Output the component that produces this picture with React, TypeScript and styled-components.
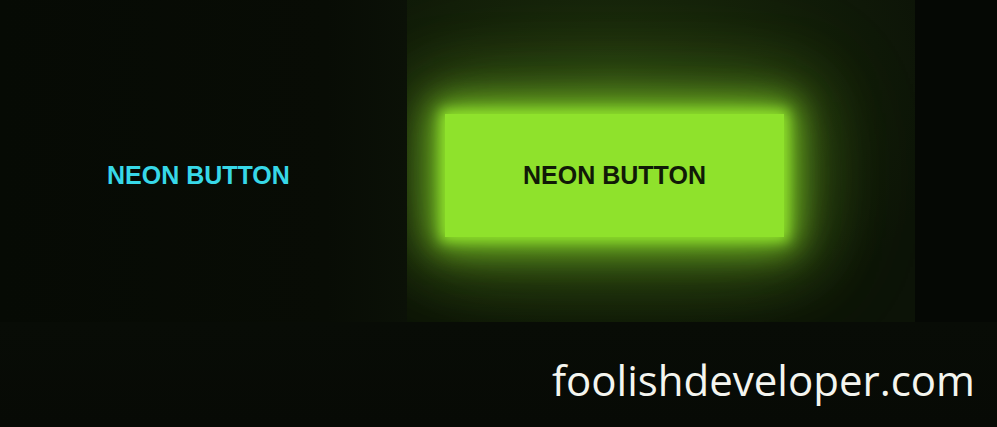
import styled, { createGlobalStyle } from "styled-components";

const GlobalStyle = createGlobalStyle`
  html, body {
    margin: 0;
    padding: 0;
    background: #060904;
  }
`;

const NEON = "#8fe22c";

const App = () => {
  return (
    <>
      <GlobalStyle />
      <Page>
        <TopRow>
          <LeftPane>
            <GhostButton>NEON BUTTON</GhostButton>
          </LeftPane>
          <Stage>
            <NeonButton>NEON BUTTON</NeonButton>
          </Stage>
          <Gutter />
        </TopRow>
        <Footer>
          <Watermark>foolishdeveloper.com</Watermark>
        </Footer>
      </Page>
    </>
  );
};

const Page = styled.main`
  width: 997px;
  height: 427px;
  display: grid;
  grid-template-rows: 322px 1fr;
  background: #070a05;
  overflow: hidden;
`;

const TopRow = styled.div`
  display: grid;
  grid-template-columns: 407px 508px 1fr;
`;

const LeftPane = styled.section`
  display: flex;
  align-items: flex-start;
  padding: 160px 0 0 107px;
  background: linear-gradient(90deg, #060a04 0%, #080c05 80%, #0b1107 100%);
`;

const GhostButton = styled.button`
  border: none;
  background: none;
  padding: 0;
  font-family: "Liberation Sans", Arial, sans-serif;
  font-weight: 700;
  font-size: 25px;
  line-height: 30px;
  color: #37d8e8;
  cursor: pointer;
`;

/* the lit area keeps the button's glow inside its own edges */
const Stage = styled.section`
  display: flex;
  align-items: flex-start;
  padding: 114px 0 0 38px;
  overflow: hidden;
  background: radial-gradient(
      ellipse 340px 280px at 208px 80px,
      #1a2a0c 0%,
      #121d09 55%,
      #0c1307 100%
    ),
    #0c1307;
`;

const NeonButton = styled.button`
  flex-shrink: 0;
  width: 339px;
  height: 123px;
  border: none;
  background: ${NEON};
  font-family: "Liberation Sans", Arial, sans-serif;
  font-weight: 700;
  font-size: 25px;
  color: #111a07;
  cursor: pointer;
  box-shadow: 0 0 12px 4px ${NEON}, 0 0 30px 12px rgba(143, 226, 44, 0.7),
    0 0 70px 24px rgba(143, 226, 44, 0.4),
    0 0 120px 30px rgba(143, 226, 44, 0.15);
`;

const Gutter = styled.div`
  background: #050804;
`;

const Footer = styled.footer`
  display: flex;
  justify-content: flex-end;
  align-items: flex-start;
  padding: 30px 22px 0 0;
  background: linear-gradient(180deg, #080c06 0%, #070a05 100%);
`;

const Watermark = styled.span`
  font-family: "Open Sans", "Noto Sans", sans-serif;
  font-size: 42px;
  line-height: 56px;
  color: #f4f5ef;
`;

export default App;
